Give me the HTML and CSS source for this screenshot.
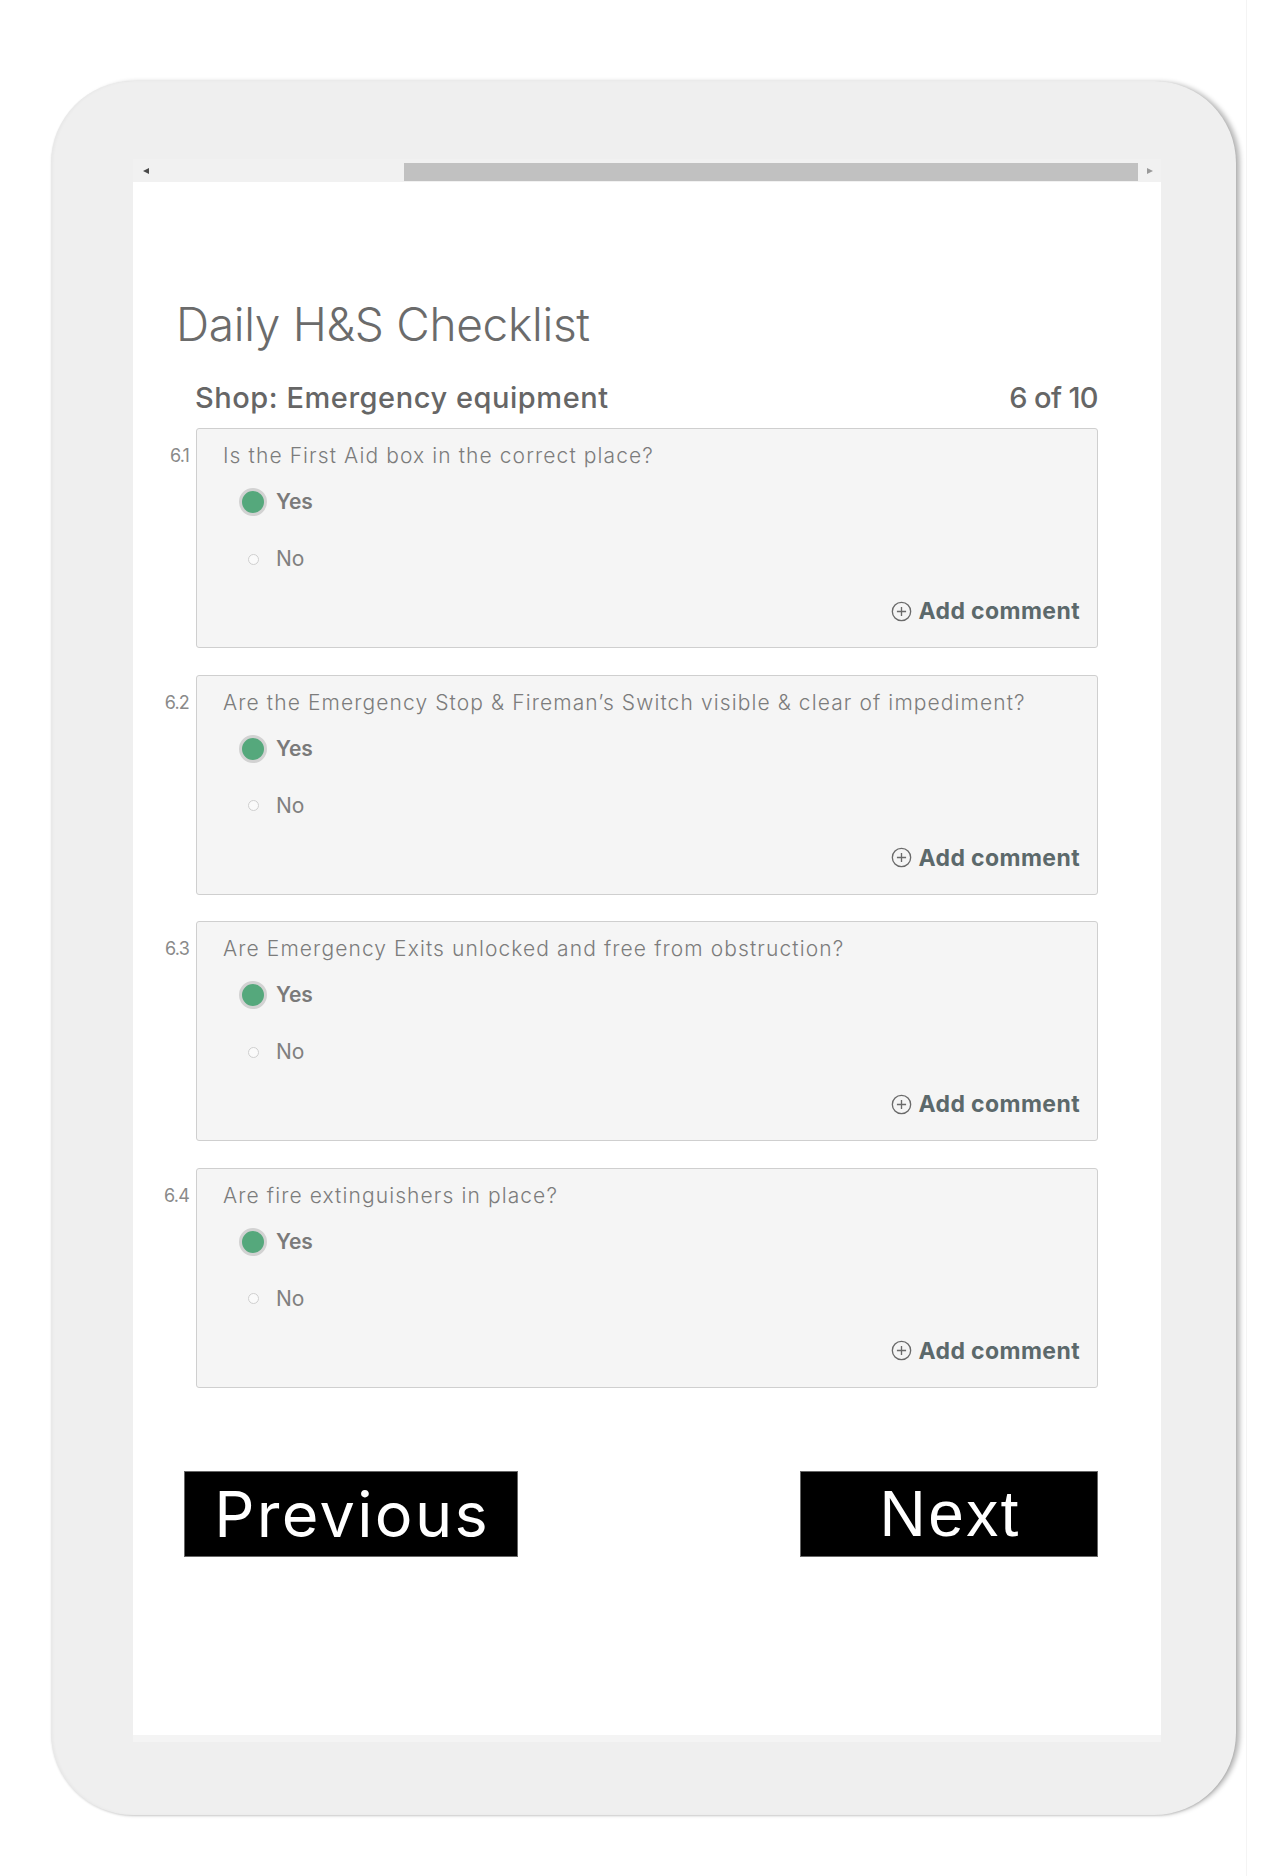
FILE: index.html
```html
<!DOCTYPE html>
<html lang="en">
<head>
<meta charset="utf-8">
<title>Daily H&amp;S Checklist</title>
<link rel="stylesheet" href="styles.css">
</head>
<body>
<div class="page">
  <div class="tablet">
    <div class="screen">
      <div class="scrollbar">
        <span class="arrow arrow-left"></span>
        <span class="thumb"></span>
        <span class="arrow arrow-right"></span>
      </div>

      <h1 class="title">Daily H&amp;S Checklist</h1>

      <div class="section-head">
        <h2 class="section-title">Shop: Emergency equipment</h2>
        <span class="progress">6 of 10</span>
      </div>

      <div class="questions">
        <div class="qrow">
          <span class="qnum">6.1</span>
          <div class="card">
            <p class="question">Is the First Aid box in the correct place?</p>
            <div class="option selected"><span class="radio-wrap"><span class="radio"></span></span><span class="opt-label">Yes</span></div>
            <div class="option"><span class="radio-wrap"><span class="radio"></span></span><span class="opt-label">No</span></div>
            <div class="card-foot">
              <span class="add-comment"><svg class="plus-icon" viewBox="0 0 22 22" width="21" height="21"><circle cx="11" cy="11" r="9.6" fill="none" stroke="#6a6a6a" stroke-width="1.4"/><path d="M11 6.2v9.6M6.2 11h9.6" stroke="#6a6a6a" stroke-width="1.4" fill="none"/></svg>Add comment</span>
            </div>
          </div>
        </div>

        <div class="qrow">
          <span class="qnum">6.2</span>
          <div class="card">
            <p class="question">Are the Emergency Stop &amp; Fireman’s Switch visible &amp; clear of impediment?</p>
            <div class="option selected"><span class="radio-wrap"><span class="radio"></span></span><span class="opt-label">Yes</span></div>
            <div class="option"><span class="radio-wrap"><span class="radio"></span></span><span class="opt-label">No</span></div>
            <div class="card-foot">
              <span class="add-comment"><svg class="plus-icon" viewBox="0 0 22 22" width="21" height="21"><circle cx="11" cy="11" r="9.6" fill="none" stroke="#6a6a6a" stroke-width="1.4"/><path d="M11 6.2v9.6M6.2 11h9.6" stroke="#6a6a6a" stroke-width="1.4" fill="none"/></svg>Add comment</span>
            </div>
          </div>
        </div>

        <div class="qrow">
          <span class="qnum">6.3</span>
          <div class="card">
            <p class="question">Are Emergency Exits unlocked and free from obstruction?</p>
            <div class="option selected"><span class="radio-wrap"><span class="radio"></span></span><span class="opt-label">Yes</span></div>
            <div class="option"><span class="radio-wrap"><span class="radio"></span></span><span class="opt-label">No</span></div>
            <div class="card-foot">
              <span class="add-comment"><svg class="plus-icon" viewBox="0 0 22 22" width="21" height="21"><circle cx="11" cy="11" r="9.6" fill="none" stroke="#6a6a6a" stroke-width="1.4"/><path d="M11 6.2v9.6M6.2 11h9.6" stroke="#6a6a6a" stroke-width="1.4" fill="none"/></svg>Add comment</span>
            </div>
          </div>
        </div>

        <div class="qrow">
          <span class="qnum">6.4</span>
          <div class="card">
            <p class="question">Are fire extinguishers in place?</p>
            <div class="option selected"><span class="radio-wrap"><span class="radio"></span></span><span class="opt-label">Yes</span></div>
            <div class="option"><span class="radio-wrap"><span class="radio"></span></span><span class="opt-label">No</span></div>
            <div class="card-foot">
              <span class="add-comment"><svg class="plus-icon" viewBox="0 0 22 22" width="21" height="21"><circle cx="11" cy="11" r="9.6" fill="none" stroke="#6a6a6a" stroke-width="1.4"/><path d="M11 6.2v9.6M6.2 11h9.6" stroke="#6a6a6a" stroke-width="1.4" fill="none"/></svg>Add comment</span>
            </div>
          </div>
        </div>
      </div>

      <div class="nav">
        <button class="btn btn-prev" type="button">Previous</button>
        <button class="btn btn-next" type="button">Next</button>
      </div>
    </div>
  </div>
</div>
</body>
</html>
```

FILE: styles.css
```css
* { box-sizing: border-box; }

html, body {
  margin: 0;
  padding: 0;
  background: #ffffff;
}

body {
  font-family: Inter, "Open Sans", "Liberation Sans", sans-serif;
  color: #777;
}

.page {
  width: 1247px;
  min-height: 1876px;
  padding: 81px 0 0 51px;
  border-right: 1px solid #f4f4f4;
}

.tablet {
  width: 1185px;
  height: 1734px;
  background: #efefef;
  border-radius: 82px;
  padding: 78px 75px 73px 82px;
  box-shadow:
    0 1px 2px rgba(0, 0, 0, 0.12),
    5px 0 5px -1px rgba(0, 0, 0, 0.28),
    inset 2px 0 3px rgba(0, 0, 0, 0.03);
}

.screen {
  width: 1028px;
  height: 1583px;
  background: #ffffff;
  border-bottom: 7px solid #f4f4f4;
  display: flex;
  flex-direction: column;
}

/* scrollbar */
.scrollbar {
  height: 23px;
  background: #f1f1f1;
  display: flex;
  align-items: center;
  flex-shrink: 0;
}

.arrow {
  width: 0;
  height: 0;
  border-top: 3.5px solid transparent;
  border-bottom: 3.5px solid transparent;
}

.arrow-left {
  margin-left: 10px;
  border-right: 6px solid #4a4a4a;
}

.arrow-right {
  margin-left: 9px;
  border-left: 6px solid #9a9a9a;
}

.thumb {
  margin-left: 255px;
  width: 734px;
  height: 18px;
  align-self: flex-end;
  margin-bottom: 1px;
  background: #c1c1c1;
}

/* headings */
.title {
  margin: 114px 0 0 43px;
  font-size: 46px;
  line-height: 56px;
  font-weight: 300;
  color: #6b6b6b;
  letter-spacing: -0.3px;
}

.section-head {
  margin: 28px 63px 0 62px;
  display: flex;
  justify-content: space-between;
  align-items: center;
  height: 36px;
}

.section-title {
  margin: 0;
  font-size: 29px;
  line-height: 36px;
  font-weight: 500;
  color: #666;
  letter-spacing: 0.55px;
}

.progress {
  font-size: 29px;
  line-height: 36px;
  font-weight: 500;
  color: #666;
  letter-spacing: -0.6px;
}

/* question cards */
.questions {
  margin: 12px 63px 0 0;
  display: flex;
  flex-direction: column;
  gap: 26.5px;
}

.qrow {
  display: grid;
  grid-template-columns: 56px 1fr;
  column-gap: 7px;
}

.qnum {
  text-align: right;
  padding-top: 14px;
  font-size: 18px;
  line-height: 28px;
  color: #8a8a8a;
  letter-spacing: -0.8px;
}

.card {
  background: #f5f5f5;
  border: 1px solid #cfcfcf;
  border-radius: 3px;
  padding: 13px 17px 22px 26px;
  height: 220px;
}

.question {
  margin: 0;
  font-size: 21px;
  line-height: 28px;
  font-weight: 300;
  color: #7c7c7c;
  letter-spacing: 1.1px;
  white-space: nowrap;
}

.option {
  display: flex;
  align-items: center;
  height: 28px;
  margin-left: 16px;
  margin-top: 29px;
}

.option.selected {
  margin-top: 18px;
}

.radio-wrap {
  width: 28px;
  height: 28px;
  display: flex;
  align-items: center;
  justify-content: center;
}

.radio {
  width: 11px;
  height: 11px;
  border-radius: 50%;
  border: 1px solid #cfcfcf;
  background: #fafafa;
}

.option.selected .radio {
  width: 28px;
  height: 28px;
  border: 3px solid #d2d2d2;
  background: #55a87c;
}

.opt-label {
  margin-left: 9px;
  font-size: 21px;
  line-height: 28px;
  color: #808080;
  font-weight: 400;
}

.option.selected .opt-label {
  font-weight: 600;
  color: #7a7a7a;
}

.card-foot {
  margin-top: 24px;
  height: 28px;
  display: flex;
  justify-content: flex-end;
  align-items: center;
}

.add-comment {
  display: flex;
  align-items: center;
  gap: 6px;
  font-size: 23px;
  font-weight: 700;
  color: #5c696b;
  letter-spacing: 0.4px;
}

.plus-icon {
  display: block;
}

/* navigation */
.nav {
  margin: 83px 63px 0 51px;
  display: flex;
  justify-content: space-between;
}

.btn {
  height: 86px;
  background: #000;
  color: #fff;
  border: 1px solid #666;
  border-radius: 0;
  padding: 0;
  display: flex;
  align-items: center;
  justify-content: center;
  cursor: pointer;
}

.btn-prev {
  width: 334px;
  font-family: Inter, "Open Sans", sans-serif;
  font-size: 63px;
  font-weight: 400;
  letter-spacing: 2.3px;
  padding-left: 2.3px;
}

.btn-next {
  width: 298px;
  font-family: "Liberation Sans", Arial, sans-serif;
  font-size: 64px;
  font-weight: 400;
  letter-spacing: 2.4px;
  padding-left: 2.4px;
}
```
